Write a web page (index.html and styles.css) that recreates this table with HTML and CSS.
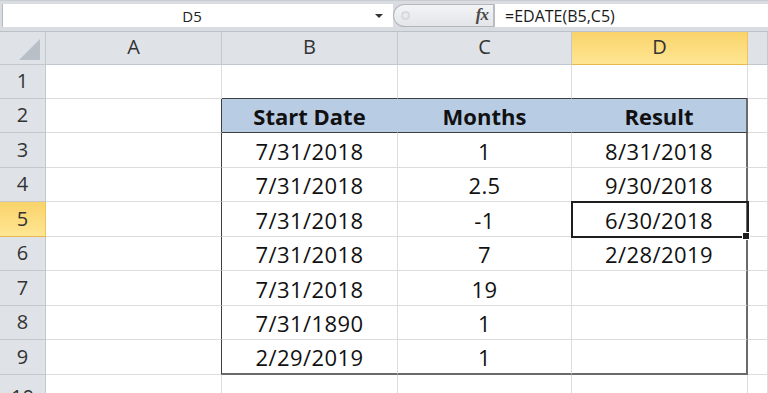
FILE: index.html
```html
<!DOCTYPE html>
<html lang="en">
<head>
    <meta charset="UTF-8">
    <meta name="viewport" content="width=device-width, initial-scale=1.0">
    <title>EDATE example</title>
    <link rel="stylesheet" href="styles.css">
</head>
<body>
    <div class="formula-bar">
        <div class="name-box">
            <span class="name-text">D5</span>
            <span class="dropdown"></span>
        </div>
        <div class="fx-pill">
            <span class="collapse-btn"></span>
            <span class="fx">fx</span>
        </div>
        <div class="formula-input">=EDATE(B5,C5)</div>
    </div>

    <div class="sheet">
        <!-- column headers -->
        <div class="corner"><span class="corner-tri"></span></div>
        <div class="col-head">A</div>
        <div class="col-head">B</div>
        <div class="col-head">C</div>
        <div class="col-head active">D</div>
        <div class="col-head"></div>

        <!-- row 1 -->
        <div class="row-head">1</div>
        <div class="cell"></div>
        <div class="cell edge-t"></div>
        <div class="cell edge-t"></div>
        <div class="cell edge-t"></div>
        <div class="cell"></div>

        <!-- row 2 -->
        <div class="row-head">2</div>
        <div class="cell edge-l"></div>
        <div class="cell th edge-h">Start Date</div>
        <div class="cell th edge-h">Months</div>
        <div class="cell th edge-h edge-r">Result</div>
        <div class="cell"></div>

        <!-- row 3 -->
        <div class="row-head">3</div>
        <div class="cell edge-l"></div>
        <div class="cell">7/31/2018</div>
        <div class="cell">1</div>
        <div class="cell edge-r">8/31/2018</div>
        <div class="cell"></div>

        <!-- row 4 -->
        <div class="row-head">4</div>
        <div class="cell edge-l"></div>
        <div class="cell">7/31/2018</div>
        <div class="cell">2.5</div>
        <div class="cell edge-r">9/30/2018</div>
        <div class="cell"></div>

        <!-- row 5 -->
        <div class="row-head active">5</div>
        <div class="cell edge-l"></div>
        <div class="cell">7/31/2018</div>
        <div class="cell">-1</div>
        <div class="cell edge-r selected">6/30/2018</div>
        <div class="cell"></div>

        <!-- row 6 -->
        <div class="row-head">6</div>
        <div class="cell edge-l"></div>
        <div class="cell">7/31/2018</div>
        <div class="cell">7</div>
        <div class="cell edge-r">2/28/2019</div>
        <div class="cell"></div>

        <!-- row 7 -->
        <div class="row-head">7</div>
        <div class="cell edge-l"></div>
        <div class="cell">7/31/2018</div>
        <div class="cell">19</div>
        <div class="cell edge-r"></div>
        <div class="cell"></div>

        <!-- row 8 -->
        <div class="row-head">8</div>
        <div class="cell edge-l"></div>
        <div class="cell">7/31/1890</div>
        <div class="cell">1</div>
        <div class="cell edge-r"></div>
        <div class="cell"></div>

        <!-- row 9 -->
        <div class="row-head">9</div>
        <div class="cell edge-l"></div>
        <div class="cell edge-b">2/29/2019</div>
        <div class="cell edge-b">1</div>
        <div class="cell edge-b edge-r"></div>
        <div class="cell"></div>

        <!-- row 10 -->
        <div class="row-head">10</div>
        <div class="cell"></div>
        <div class="cell"></div>
        <div class="cell"></div>
        <div class="cell"></div>
        <div class="cell"></div>
    </div>
</body>
</html>
```

FILE: styles.css
```css
* {
    box-sizing: border-box;
}

body {
    margin: 0;
    font-family: 'Open Sans', 'Liberation Sans', sans-serif;
    color: #111;
    background-color: #ffffff;
    overflow: hidden;
    height: 393px;
}

/* Formula bar */
.formula-bar {
    display: flex;
    height: 31px;
    padding: 3px 0 4px 2px;
    background-color: #d9dde2;
    border-top: 1px solid #c9cdd2;
}

.name-box {
    width: 391px;
    display: flex;
    align-items: center;
    background-color: #ffffff;
    border-left: 1px solid #b5bac0;
}

.name-text {
    flex: 1;
    text-align: center;
    font-size: 15px;
    color: #222;
    padding-left: 6px;
}

.dropdown {
    width: 0;
    height: 0;
    border-left: 4px solid transparent;
    border-right: 4px solid transparent;
    border-top: 4px solid #333;
    margin-right: 10px;
}

.fx-pill {
    width: 102px;
    display: flex;
    align-items: center;
    justify-content: space-between;
    padding: 0 5px 0 7px;
    background: linear-gradient(#f3f4f6, #e3e5e8);
    border: 1px solid #b3b7bd;
    border-right: 2px solid #b9bdc2;
    border-radius: 12px 0 0 12px;
}

.collapse-btn {
    width: 9px;
    height: 9px;
    border-radius: 50%;
    background: radial-gradient(circle, #e9ebee 30%, #cdd1d6 100%);
    border: 1px solid #d0d3d8;
}

.fx {
    font-family: 'Liberation Serif', serif;
    font-style: italic;
    font-weight: bold;
    font-size: 17px;
    color: #4a4a4a;
    letter-spacing: -1px;
    margin-top: -2px;
}

.formula-input {
    flex: 1;
    display: flex;
    align-items: center;
    padding-left: 10px;
    background-color: #ffffff;
    font-size: 16px;
    color: #1a1a1a;
}

/* Sheet grid */
.sheet {
    display: grid;
    grid-template-columns: 46px 176px 176px 174px 176px 1fr;
    grid-template-rows: 33px 34px 34px 35px 34px 35px 34px 35px 34px 35px 40px;
    border-top: 1px solid #bcc1c7;
}

.corner,
.col-head,
.row-head {
    background-color: #dfe3e8;
    border-right: 1px solid #c3c8ce;
    border-bottom: 1px solid #c3c8ce;
    color: #333;
    font-size: 20px;
    display: flex;
    justify-content: center;
    align-items: flex-end;
    padding-bottom: 4px;
}

.corner {
    justify-content: flex-end;
    padding: 0 5px 4px 0;
}

.corner-tri {
    width: 21px;
    height: 21px;
    background-color: #b9bfc6;
    clip-path: polygon(100% 0, 100% 100%, 0 100%);
}

.col-head.active,
.row-head.active {
    background: linear-gradient(#f9d36a, #ffe693);
    border-right-color: #efc45a;
    border-bottom-color: #e8b94e;
}

.cell {
    border-right: 1px solid #dcdcdc;
    border-bottom: 1px solid #dcdcdc;
    font-size: 22px;
    letter-spacing: 0.4px;
    display: flex;
    justify-content: center;
    align-items: flex-end;
    line-height: 22px;
    padding-bottom: 5px;
}

.cell.th {
    background-color: #b8cce4;
    border-right-color: #b8cce4;
    font-weight: bold;
    letter-spacing: 0;
}

/* Table outline */
.cell.edge-t,
.cell.edge-h {
    border-bottom: 1px solid #3e3e3e;
}

.cell.edge-l {
    border-right: 1px solid #3e3e3e;
}

.cell.edge-r {
    border-right: 2px solid #6a6a6a;
}

.cell.edge-b {
    border-bottom: 2px solid #6a6a6a;
}

/* Active cell */
.cell.selected {
    position: relative;
    outline: 2px solid #1e1e1e;
    outline-offset: -1px;
}

.cell.selected::after {
    content: "";
    position: absolute;
    right: -4px;
    bottom: -4px;
    width: 6px;
    height: 6px;
    background-color: #1e1e1e;
    border: 1px solid #ffffff;
}
```
